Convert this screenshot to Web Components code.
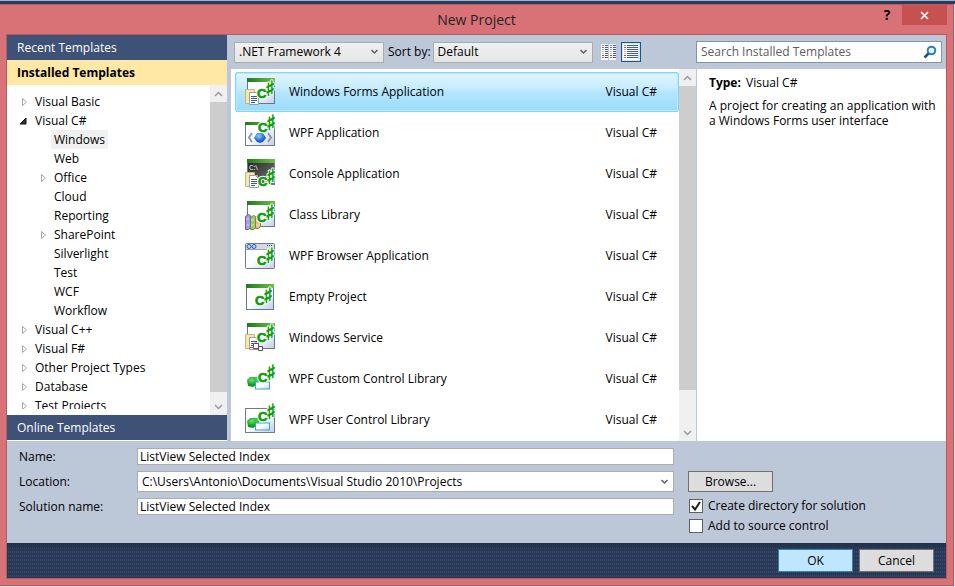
<!DOCTYPE html>
<html lang="en">
<head>
<meta charset="utf-8">
<title>New Project</title>
<style>
    body {
        margin: 0;
        padding: 4px 1px 1px 0;
        background: linear-gradient(#9db2cb 1px, #2b3c59 1px, #2b3c59 4px, #d3dcec 4px);
        font: 12px/16px "Open Sans", "Noto Sans", sans-serif;
        color: #000;
    }
</style>
</head>
<body>
<project-dialog></project-dialog>

<script>
const base = `
    * { box-sizing: border-box; }
    button, input, select { font: inherit; color: inherit; margin: 0; border-radius: 0; }
    svg { display: block; }
`;

// green C# mark with a white halo, x/y is the left end of the baseline
const mark = (x, y) => {
    const letters = `
        <text x="${x - 1}" y="${y}" font-size="13" font-family="Liberation Sans, sans-serif">C</text>
        <text x="${x + 7}" y="${y - 2}" font-size="21" font-family="DejaVu Sans, sans-serif">♯</text>`;
    return `
        <g font-weight="bold" fill="#fff" stroke="#fff" stroke-width="2.500" aria-hidden="true">${letters}</g>
        <g font-weight="bold" fill="#0d9c0d" stroke="#0d9c0d" stroke-width=".7">${letters}</g>`;
};

const frame = (x, y, fill = 'url(#face)') => `
    <rect x="${x + 0.5}" y="${y + 0.5}" width="27" height="25" fill="${fill}" stroke="#65788c"/>
    <rect x="${x}" y="${y}" width="28" height="4" fill="url(#bar)"/>`;

const papers = y => `
    <path d="M1.500 ${y + 0.5}h9v3h3v11h-12z" fill="#fbe7a5" stroke="#c9b47c"/>
    <path d="M5.500 ${y + 3.5}h6l3 3v9h-9z" fill="#fff" stroke="#8f9db8"/>
    <path d="M7 ${y + 7.5}h6M7 ${y + 9.5}h6M7 ${y + 11.5}h6M7 ${y + 13.5}h4" stroke="#3458a8"/>`;

const control = `
    <path d="M3 17l3-3 5 0 4 3-1 4-5 3-5-1z" fill="url(#ball)"/>
    <path d="M9 15l6-2v8z" fill="#3ecb3e"/>
    <rect x="11.500" y="19" width="14" height="7" fill="url(#face)" stroke="#37a9cc"/>`;

const icons = {
    forms: frame(3, 2) + papers(13) + mark(14, 22),
    wpf: `<rect x="1.500" y="5.500" width="29" height="23" fill="url(#face)" stroke="#737b84"/>
        <path d="M1 5h30v3h-30z" fill="url(#bar)"/>
        <path d="M8 16l-3 4.500 3 4.500M24 16l3 4.500-3 4.500" fill="none" stroke="#8f98a3" stroke-width="2"/>
        <path d="M10 21l3-5h6l3 5-3 4-3 1-3-1z" fill="url(#blue)"/>` + mark(15, 15),
    console: frame(3, 1, 'url(#dark)') +
        `<text x="5" y="12" font-size="7" fill="#fff" font-family="Open Sans, sans-serif">C:\\</text>` +
        papers(14) + mark(15, 28),
    library: frame(3, 2) +
        `<path d="M1.500 17.500l3-2 2 1v12l-2 2h-3z" fill="#a89be0" stroke="#6a5ca8"/>
        <path d="M6.500 18.500l3-2 2 1v11l-2 2h-3z" fill="#9cc978" stroke="#5e8f3c"/>
        <path d="M11.500 18.500l3-2 2 2v9l-2 2h-3z" fill="#dfc083" stroke="#9b7a3d"/>
        <path d="M2 20h3M2 26h3M7 21h3M7 26h3M12 21h4M12 26h4" stroke="#fff8"/>` + mark(14, 23),
    browser: `<rect x="1.500" y="3.500" width="29" height="25" rx="1" fill="url(#face)" stroke="#74787e"/>
        <path d="M2 4h28v5h-28z" fill="#d5dae2"/><path d="M2 9.500h28" stroke="#9aa1aa"/>
        <circle cx="5" cy="6.500" r="2" fill="#b8d3ff" stroke="#2856b0"/><circle cx="10" cy="6.500" r="2" fill="#b8d3ff" stroke="#2856b0"/>
        <path d="M23 5.500h1M25 5.500h1M27 5.500h1" stroke="#444"/>` + mark(14, 25),
    empty: frame(2, 3) + mark(12, 24),
    service: frame(3, 1) + papers(12) +
        `<path d="M9.500 21.500h5v5h-5zM14.500 24.500h4v4h-4z" fill="#fff" stroke="#555"/>
        <path d="M6 25.500h4" stroke="#c24747"/><path d="M12 22v-3" stroke="#3458a8"/>` + mark(14, 20),
    custom: control + mark(15, 19),
    user: `<rect x="1.500" y="4.500" width="29" height="24" fill="url(#face)" stroke="#777b80"/>` + control + mark(15, 17)
};

class TemplateIcon extends HTMLElement {
    constructor() {
        super();
        this.attachShadow({ mode: 'open' });
    }

    connectedCallback() {
        this.shadowRoot.innerHTML = `
            <style>
                :host { display: block; width: 32px; height: 32px; flex: none; }
                svg { display: block; overflow: visible; }
            </style>
            <svg width="32" height="32" viewBox="0 0 32 32" aria-hidden="true">
                <defs>
                    <linearGradient id="face" x2="1" y2="1"><stop stop-color="#fff"/><stop offset=".5" stop-color="#fafcff"/><stop offset="1" stop-color="#c3d0e8"/></linearGradient>
                    <linearGradient id="bar"><stop stop-color="#1d7a1d"/><stop offset="1" stop-color="#6fc043"/></linearGradient>
                    <linearGradient id="dark" x2="1" y2="1"><stop stop-color="#222"/><stop offset="1" stop-color="#777"/></linearGradient>
                    <radialGradient id="ball" cx=".4" cy=".3"><stop stop-color="#6be56b"/><stop offset="1" stop-color="#0d9a1e"/></radialGradient>
                    <radialGradient id="blue" cx=".4" cy=".3"><stop stop-color="#8fd0ff"/><stop offset="1" stop-color="#1d62cc"/></radialGradient>
                </defs>
                ${icons[this.getAttribute('name')]}
            </svg>
        `;
    }
}

class TemplateRow extends HTMLElement {
    constructor() {
        super();
        this.attachShadow({ mode: 'open' });
    }

    connectedCallback() {
        this.setAttribute('role', 'option');
        this.shadowRoot.innerHTML = `
            <style>
                :host {
                    display: flex; align-items: center; box-sizing: border-box; height: 40px;
                    padding: 0 21px 0 8px; border: 1px solid transparent; border-radius: 2px;
                }
                :host([selected]) {
                    border-color: #85d5f5;
                    background: linear-gradient(#e2f5fe, #c5ecfe 40%, #b5e6fd 50%, #98dcfb);
                    box-shadow: inset 0 0 0 1px #b9e9fd;
                }
                .name { flex: 1; padding-left: 13px; }
            </style>
            <template-icon name="${this.getAttribute('icon')}"></template-icon>
            <span class="name"><slot></slot></span>
            <span>Visual C#</span>
        `;
    }
}

class TreeItem extends HTMLElement {
    constructor() {
        super();
        this.attachShadow({ mode: 'open' });
    }

    connectedCallback() {
        this.setAttribute('role', 'treeitem');
        const arrows = {
            closed: '<path d="M3.500 2.500v7l4-3.500z" fill="#fff" stroke="#a6a6a6"/>',
            open: '<path d="M7 3v6h-6z" fill="#333" stroke="#111"/>'
        };
        this.shadowRoot.innerHTML = `
            <style>
                :host { display: flex; align-items: center; height: 19px; padding-left: 12px; }
                :host([child]) { padding-left: 31px; }
                svg { width: 13px; height: 12px; }
                span { padding: 0 3px; line-height: 19px; white-space: nowrap; }
                :host([selected]) span { background: #f0f0f0; }
            </style>
            <svg viewBox="0 0 13 12" aria-hidden="true">${arrows[this.getAttribute('arrow')] || ''}</svg>
            <span><slot></slot></span>
        `;
    }
}

class ScrollTrack extends HTMLElement {
    constructor() {
        super();
        this.attachShadow({ mode: 'open' });
    }

    connectedCallback() {
        this.shadowRoot.innerHTML = `
            <style>
                ${base}
                :host { display: flex; flex-direction: column; width: 17px; flex: none; background: #f0f0f0; }
                button { border: 0; background: none; height: 17px; padding: 0; flex: none; display: grid; place-items: center; }
                .track { flex: 1; }
                .thumb { height: var(--thumb, 100%); background: #cdcdcd; }
            </style>
            <button aria-label="Scroll up"><svg width="9" height="6"><path d="M1 5l3.500-3.500L8 5" fill="none" stroke="#9b9b9b" stroke-width="1.500"/></svg></button>
            <div class="track"><div class="thumb"></div></div>
            <button aria-label="Scroll down"><svg width="9" height="6"><path d="M1 1l3.500 3.500L8 1" fill="none" stroke="#9b9b9b" stroke-width="1.500"/></svg></button>
        `;
    }
}

class ComboBox extends HTMLElement {
    constructor() {
        super();
        this.attachShadow({ mode: 'open' });
    }

    connectedCallback() {
        this.shadowRoot.innerHTML = `
            <style>
                ${base}
                :host { display: grid; grid-template-columns: 1fr 14px; align-items: center; }
                select {
                    grid-area: 1 / 1 / 2 / 3; width: 100%; height: 21px; padding: 0 4px; appearance: none;
                    border: 1px solid #acacac; background: linear-gradient(#f0f0f0, #e5e5e5);
                }
                :host([plain]) select { background: #fff; }
                svg { grid-area: 1 / 2; pointer-events: none; }
            </style>
            <select aria-label="${this.getAttribute('label')}"><option>${this.getAttribute('value')}</option></select>
            <svg width="9" height="6" aria-hidden="true"><path d="M1.500 1l3 3 3-3" fill="none" stroke="#606060" stroke-width="1.500"/></svg>
        `;
    }
}

class FormRow extends HTMLElement {
    constructor() {
        super();
        this.attachShadow({ mode: 'open' });
    }

    connectedCallback() {
        const label = this.getAttribute('label');
        const value = this.getAttribute('value');
        const field = this.hasAttribute('combo')
            ? `<combo-box plain label="${label}" value="${value}"></combo-box>`
            : `<input id="field" type="text" value="${value}">`;
        this.shadowRoot.innerHTML = `
            <style>
                ${base}
                :host { display: grid; grid-template-columns: 118px 1fr; align-items: center; height: 25px; }
                input { width: 100%; height: 17px; padding: 0 2px; border: 1px solid #abadb3; background: #fff; }
            </style>
            <label for="field">${label}:</label>
            ${field}
        `;
    }
}

class CheckOption extends HTMLElement {
    constructor() {
        super();
        this.attachShadow({ mode: 'open' });
    }

    connectedCallback() {
        this.shadowRoot.innerHTML = `
            <style>
                ${base}
                :host { display: block; }
                label { display: flex; align-items: center; gap: 5px; height: 20px; }
                .box { display: grid; }
                input { appearance: none; width: 14px; height: 14px; border: 1px solid #606060; background: #fff; grid-area: 1 / 1; }
                svg { grid-area: 1 / 1; pointer-events: none; visibility: hidden; }
                input:checked + svg { visibility: visible; }
            </style>
            <label>
                <span class="box">
                    <input type="checkbox" ${this.hasAttribute('checked') ? 'checked' : ''}>
                    <svg width="14" height="14" aria-hidden="true"><path d="M3 7l3 3.500L11 3" fill="none" stroke="#212121" stroke-width="2"/></svg>
                </span>
                <slot></slot>
            </label>
        `;
    }
}

class PushButton extends HTMLElement {
    constructor() {
        super();
        this.attachShadow({ mode: 'open' });
    }

    connectedCallback() {
        this.shadowRoot.innerHTML = `
            <style>
                ${base}
                :host { display: block; width: 75px; height: 23px; }
                button { width: 100%; height: 100%; padding: 0; border: 1px solid #707070; background: #ddd; }
                :host([primary]) button { border-color: #3c7fb1; background: #bee6fd; }
            </style>
            <button type="button"><slot></slot></button>
        `;
    }
}

// rows of small coloured dashes for the two list view buttons
const dots = ['#7a9c7a', '#d9534f', '#8fb3e8', '#d8c820', '#b8d060', '#d33', '#e06a3a'];
const dashes = columns => columns.map(([x, w]) =>
    `<path d="M${x - 1} 0h${w + 4}v16h-${w + 4}z" fill="#fff"/>` +
    dots.map((color, i) => `
        <path d="M${x} ${i * 2 + 1}.500h2" stroke="${color}"/>
        <path d="M${x + 3} ${i * 2 + 1}.500h${w}" stroke="#3f55c0"/>`).join('')).join('');

class ProjectDialog extends HTMLElement {
    constructor() {
        super();
        this.attachShadow({ mode: 'open' });
    }

    connectedCallback() {
        this.shadowRoot.innerHTML = `
            <style>
                ${base}
                :host { display: block; box-sizing: border-box; padding: 0 6px 6px; background: #d97276; border: 1px solid #b85a5e; border-left: 0; }
                .title { display: grid; grid-template-columns: 1fr auto 1fr; height: 29px; }
                h1 { grid-column: 2; margin: 0; font-size: 14px; font-weight: normal; line-height: 30px; color: #222; }
                .controls { display: flex; justify-content: flex-end; }
                .controls button { border: 0; padding: 0; height: 20px; background: none; display: grid; place-items: center; }
                .help { width: 30px; font-weight: bold; font-size: 14px; }
                .controls .close { width: 45px; background: #c75050; }
                .content { border: 1px solid #b85a5e; background: #bcc7d8; }

                .main { display: flex; }
                .side { width: 220px; flex: none; display: flex; flex-direction: column; border-bottom: 1px solid #fff; }
                .side > button {
                    height: 25px; padding: 0 10px; border: 0; text-align: left;
                    background: #3e5277; color: #fff; flex: none;
                }
                .side > .current { background: #ffe8a6; color: #000; font-weight: bold; }
                .tree { flex: 1 1 0px; min-height: 0; display: flex; background: #fff; }
                .items { flex: 1; margin: 7px 0 6px; overflow: hidden; }
                .tree scroll-track { --thumb: 98%; }

                .right { flex: 1; min-width: 0; margin-left: 4px; }
                .bar { display: flex; align-items: center; height: 34px; padding: 0 4px 0 3px; }
                .framework { width: 150px; margin-right: 4px; }
                .sort { width: 160px; margin-left: 2px; margin-right: 4px; }
                .view { width: 20px; height: 20px; padding: 0; margin-left: 2px; border: 0; background: none; display: grid; place-items: center; }
                .view.on { border: 1px solid #1d5480; background: #cfe6f8; }
                .search {
                    display: flex; align-items: center; width: 246px; height: 22px; margin-left: auto; padding: 0 4px;
                    border: 1px solid #8793a5; background: #fff;
                }
                .search input { flex: 1; min-width: 0; border: 0; padding: 0; background: none; outline: 0; }
                .search input::placeholder { color: #5d5d5d; opacity: 1; }

                .panes { display: flex; background: #fff; }
                .list { flex: 1; display: grid; gap: 1px; padding: 3px 0 1px 4px; }
                .panes scroll-track { --thumb: 90%; }
                .about { width: 250px; border-left: 1px solid #bcc7d8; padding: 6px 8px 0 12px; }
                .about p { margin: 0 0 8px; line-height: 15px; }
                .about b { margin-right: 2px; }

                .form { display: flex; gap: 14px; height: 102px; padding: 3px 0 0 12px; }
                .fields { flex: 1; max-width: 655px; }
                .extra { width: 258px; padding-top: 27px; }
                .extra push-button { width: 85px; height: 21px; margin-bottom: 4px; }
                .extra check-option { margin-left: 1px; }
                .footer {
                    display: flex; justify-content: flex-end; gap: 6px; height: 35px; padding: 6px 12px 0 0;
                    background:
                        linear-gradient(#20304a, transparent 8px),
                        conic-gradient(#35496b 25%, transparent 0) 0 0 / 4px 4px,
                        #293955;
                    background-size: auto, 2px 4px;
                }
            </style>
            <div class="title">
                <h1>New Project</h1>
                <div class="controls">
                    <button class="help" aria-label="Help">?</button>
                    <button class="close" aria-label="Close"><svg width="9" height="9"><path d="M1 1l7 7M8 1l-7 7" stroke="#fff" stroke-width="1.700"/></svg></button>
                </div>
            </div>
            <div class="content">
                <div class="main">
                    <div class="side">
                        <button>Recent Templates</button>
                        <button class="current">Installed Templates</button>
                        <div class="tree">
                            <div class="items" role="tree">
                                <tree-item arrow="closed">Visual Basic</tree-item>
                                <tree-item arrow="open">Visual C#</tree-item>
                                <tree-item child selected>Windows</tree-item>
                                <tree-item child>Web</tree-item>
                                <tree-item child arrow="closed">Office</tree-item>
                                <tree-item child>Cloud</tree-item>
                                <tree-item child>Reporting</tree-item>
                                <tree-item child arrow="closed">SharePoint</tree-item>
                                <tree-item child>Silverlight</tree-item>
                                <tree-item child>Test</tree-item>
                                <tree-item child>WCF</tree-item>
                                <tree-item child>Workflow</tree-item>
                                <tree-item arrow="closed">Visual C++</tree-item>
                                <tree-item arrow="closed">Visual F#</tree-item>
                                <tree-item arrow="closed">Other Project Types</tree-item>
                                <tree-item arrow="closed">Database</tree-item>
                                <tree-item arrow="closed">Test Projects</tree-item>
                            </div>
                            <scroll-track></scroll-track>
                        </div>
                        <button>Online Templates</button>
                    </div>
                    <div class="right">
                        <div class="bar">
                            <combo-box class="framework" label="Framework" value=".NET Framework 4"></combo-box>
                            <span>Sort by:</span>
                            <combo-box class="sort" label="Sort by" value="Default"></combo-box>
                            <button class="view" aria-label="Small icons"><svg width="16" height="16">${dashes([[1, 3], [9, 3]])}</svg></button>
                            <button class="view on" aria-label="Medium icons"><svg width="16" height="16">${dashes([[1, 11]])}</svg></button>
                            <div class="search">
                                <input type="text" placeholder="Search Installed Templates" aria-label="Search Installed Templates">
                                <svg width="14" height="14" aria-hidden="true"><circle cx="8.500" cy="5.500" r="3.800" fill="#e8f5ff" stroke="#2f7fc0" stroke-width="2"/><path d="M5.500 8.500l-4 4" stroke="#23479a" stroke-width="2.500"/></svg>
                            </div>
                        </div>
                        <div class="panes">
                            <div class="list" role="listbox" aria-label="Templates">
                                <template-row selected icon="forms">Windows Forms Application</template-row>
                                <template-row icon="wpf">WPF Application</template-row>
                                <template-row icon="console">Console Application</template-row>
                                <template-row icon="library">Class Library</template-row>
                                <template-row icon="browser">WPF Browser Application</template-row>
                                <template-row icon="empty">Empty Project</template-row>
                                <template-row icon="service">Windows Service</template-row>
                                <template-row icon="custom">WPF Custom Control Library</template-row>
                                <template-row icon="user">WPF User Control Library</template-row>
                            </div>
                            <scroll-track></scroll-track>
                            <div class="about">
                                <p><b>Type:</b> Visual C#</p>
                                <p>A project for creating an application with a Windows Forms user interface</p>
                            </div>
                        </div>
                    </div>
                </div>
                <div class="form">
                    <div class="fields">
                        <form-row label="Name" value="ListView Selected Index"></form-row>
                        <form-row combo label="Location" value="C:\\Users\\Antonio\\Documents\\Visual Studio 2010\\Projects"></form-row>
                        <form-row label="Solution name" value="ListView Selected Index"></form-row>
                    </div>
                    <div class="extra">
                        <push-button>Browse...</push-button>
                        <check-option checked>Create directory for solution</check-option>
                        <check-option>Add to source control</check-option>
                    </div>
                </div>
                <div class="footer">
                    <push-button primary>OK</push-button>
                    <push-button>Cancel</push-button>
                </div>
            </div>
        `;
    }
}

customElements.define('template-icon', TemplateIcon);
customElements.define('template-row', TemplateRow);
customElements.define('tree-item', TreeItem);
customElements.define('scroll-track', ScrollTrack);
customElements.define('combo-box', ComboBox);
customElements.define('form-row', FormRow);
customElements.define('check-option', CheckOption);
customElements.define('push-button', PushButton);
customElements.define('project-dialog', ProjectDialog);
</script>
</body>
</html>
